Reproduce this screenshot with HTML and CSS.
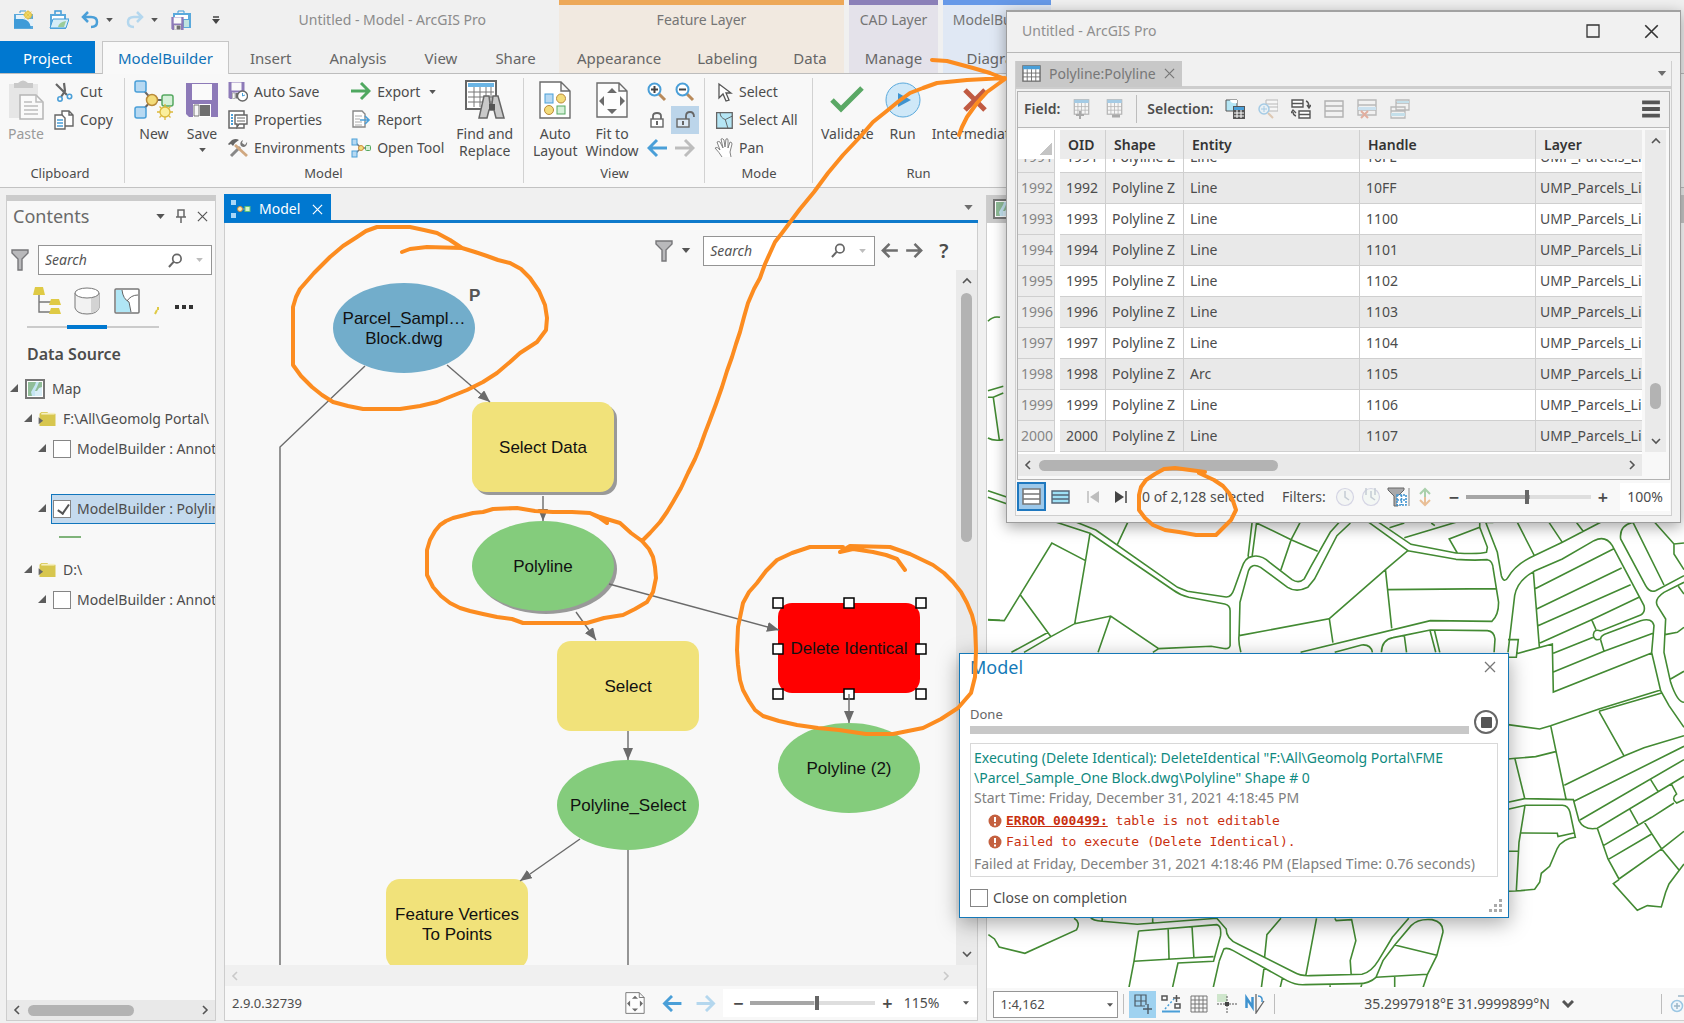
FILE: index.html
```html
<!DOCTYPE html>
<html lang="en">
<head>
<meta charset="utf-8">
<title>Untitled - Model - ArcGIS Pro</title>
<link rel="stylesheet" href="styles.css">
</head>
<body>
<svg class="defs" aria-hidden="true">
  <defs>
    <marker id="tip" viewBox="0 0 12 10" refX="12" refY="5" markerWidth="12" markerHeight="10" markerUnits="userSpaceOnUse" orient="auto"><path d="M0 0L12 5L0 10z" fill="#6b6b6b"/></marker>
    <symbol id="i-x" viewBox="0 0 12 12"><path d="M1 1l10 10M11 1L1 11" fill="none" stroke="currentColor" stroke-width="1.3"/></symbol>
    <symbol id="i-down" viewBox="0 0 10 6"><path d="M0 0h10L5 6z" fill="currentColor"/></symbol>
    <symbol id="i-tree" viewBox="0 0 8 8"><path d="M8 0v8H0z" fill="#5c5c5c"/></symbol>
    <symbol id="i-chev" viewBox="0 0 12 12"><path d="M2 8l4-4 4 4" fill="none" stroke="currentColor" stroke-width="1.6"/></symbol>
    <symbol id="i-filter" viewBox="0 0 18 22"><path d="M1 1h16v3l-6 6v11H7V10L1 4z" fill="#b9b9bb" stroke="#77777a" stroke-width="1.4"/></symbol>
    <symbol id="i-lens" viewBox="0 0 16 16"><circle cx="9.500" cy="6" r="4.500" fill="none" stroke="#666" stroke-width="1.8"/><path d="M6 9.500L1 15" stroke="#666" stroke-width="2.200"/></symbol>
    <symbol id="i-left" viewBox="0 0 20 18"><path d="M10 1L2 9l8 8M2 9h18" fill="none" stroke="currentColor" stroke-width="3"/></symbol>
    <symbol id="i-right" viewBox="0 0 20 18"><path d="M10 1l8 8-8 8M18 9H0" fill="none" stroke="currentColor" stroke-width="3"/></symbol>
    <symbol id="i-model" viewBox="0 0 20 20"><path d="M4 4l6 6 6 0M10 10l-6 6" stroke="#777" stroke-width="1.5" fill="none"/><rect x="1" y="1" width="5" height="6" fill="#b7d9f2" stroke="#4a9fd8"/><rect x="1" y="13" width="5" height="6" fill="#b7d9f2" stroke="#4a9fd8"/><circle cx="10" cy="10" r="2.500" fill="#f3dc7a" stroke="#c98b3a"/><rect x="14.500" y="7.500" width="5" height="5" rx="1" fill="#d5f0d8" stroke="#55a860"/></symbol>
    <symbol id="i-modelw" viewBox="0 0 20 18"><path d="M9 9h6" stroke="#9ab" fill="none"/><rect x="0" y="0" width="5" height="5" fill="#a9d6f7"/><rect x="0" y="13" width="5" height="5" fill="#a9d6f7"/><circle cx="9" cy="9" r="2.500" fill="#fbe9b8" stroke="#c98b3a"/><rect x="14" y="6.500" width="5" height="5" fill="#d8f5c8" stroke="#5fbf7a"/></symbol>
    <symbol id="i-floppy" viewBox="0 0 32 34"><path d="M0 0h32v34H3l-3-3z" fill="#8d7ab8"/><path d="M6 1h20v16H6z" fill="#fafafa"/><path d="M7 21h18v13H7z" fill="#fff"/><path d="M14 22h10v11H14z" fill="#6f6f6f"/><path d="M8 22h5v11H8z" fill="#f8f8f8" stroke="#777"/></symbol>
    <symbol id="i-fit" viewBox="0 0 32 36"><path d="M1 1h22l8 8v26H1zM23 1v8h8" fill="#fdfdfd" stroke="#6b6b6b" stroke-width="1.400"/><path d="M16 6l5 5H11zM16 32l5-5H11zM3 19l5-5v10zM29 19l-5-5v10z" fill="#6b6b6b"/></symbol>
    <symbol id="i-map" viewBox="0 0 20 20"><rect x="1" y="1" width="18" height="18" fill="#fff" stroke="#777" stroke-width="2"/><path d="M3 3h14v14H3z" fill="#90bd98"/><path d="M17 8l-3 1-2 3-3 0 1 5h7z" fill="#d9eef7"/><path d="M6 13l4-7 1-3h3l-2 5-2 4v5H7z" fill="#c5e5f3"/></symbol>
    <symbol id="i-folder" viewBox="0 0 20 18"><path d="M1 3l2-2h7l1 2h8v14H1z" fill="#d7c64e"/><path d="M3 3h15" stroke="#f6f0c0" stroke-width="2"/><path d="M0 7l5 4-5 4z" fill="#666"/></symbol>
    <symbol id="i-grid" viewBox="0 0 20 20"><rect x="1" y="1" width="18" height="18" fill="#fff" stroke="#6d6d6d" stroke-width="1.500"/><path d="M1 1h18v4H1z" fill="#4a9fd8"/><path d="M1 9.500h18M1 14h18M5.500 5v14M10 5v14M14.500 5v14" stroke="#6d6d6d"/></symbol>
    <symbol id="i-err" viewBox="0 0 14 14"><circle cx="7" cy="7" r="6.500" fill="#c4603f"/><path d="M7 3v5M7 9.500v2" stroke="#fff" stroke-width="2"/></symbol>
    <symbol id="i-sel" viewBox="0 0 20 20"><path d="M1 1h18v18H1z" fill="#b5e6f5" stroke="#666" stroke-width="1.500"/><path d="M5 1q0 6 6 8l3 10M19 5l-8 4" fill="none" stroke="#555"/></symbol>
  </defs>
</svg>

<div class="app">
<header class="top">
  <div class="top-main">
    <div class="quick">
      <button class="ic" aria-label="New project"><svg width="20" height="20" viewBox="0 0 20 20"><path d="M0 4h19v15H0z" fill="#5aa9dc"/><path d="M2 5h12v4h5v7H2z" fill="#e4f1fa"/><path d="M0 18V9h9q7 1 8 9z" fill="#3f9bd8"/><path d="M6 3V1h6" stroke="#3f9bd8" fill="none"/><circle cx="14" cy="5" r="3.500" fill="#f7e27a" stroke="#dcb83a"/><path d="M14 0v10M9 5h10M10.500 1.500l7 7M17.500 1.500l-7 7" stroke="#e5c548" stroke-width=".8"/></svg></button>
      <button class="ic" aria-label="Open project"><svg width="20" height="20" viewBox="0 0 20 20"><path d="M1 4h16v15H1z" fill="#5aa9dc"/><path d="M3 6h12v4H3z" fill="#fff"/><path d="M6 4V1h6v3" stroke="#3f9bd8" fill="none" stroke-width="1.500"/><path d="M4 9h16l-3 9H1z" fill="#d5edf7" stroke="#3f9bd8"/><path d="M9 17q1-5 8-6l-2 6z" fill="#9acb9a"/></svg></button>
      <button class="ic undo" aria-label="Undo"><svg width="18" height="18" viewBox="0 0 18 18"><path d="M7 1L2 6l5 5M2 6h8q6 0 6 5t-6 5" fill="none" stroke="#4a9fd8" stroke-width="2.500"/></svg><svg class="c-dk" width="7" height="4"><use href="#i-down"/></svg></button>
      <button class="ic undo" aria-label="Redo"><svg width="18" height="18" viewBox="0 0 18 18"><path d="M11 1l5 5-5 5M16 6H8q-6 0-6 5t6 5" fill="none" stroke="#b4d7ee" stroke-width="2.500"/></svg><svg class="c-dk" width="7" height="4"><use href="#i-down"/></svg></button>
      <button class="ic save" aria-label="Save project"><svg width="20" height="20" viewBox="0 0 20 20"><path d="M2 3h18v15H2z" fill="#5aa9dc"/><path d="M4 5h13v4H4z" fill="#fff"/><path d="M7 3V1h6v2" stroke="#3f9bd8" fill="none"/><path d="M13 10h5v7h-5z" fill="#bfe3e0"/><svg x="0" y="7" width="13" height="13"><use href="#i-floppy"/></svg></svg></button>
      <button class="ic" aria-label="Customize"><svg width="8" height="8" viewBox="0 0 8 8"><path d="M1 1h6" stroke="#444" stroke-width="1.500"/><path d="M0 3h8L4 8z" fill="#444"/></svg></button>
      <h1>Untitled - Model - ArcGIS Pro</h1>
    </div>
    <nav class="tabs">
      <a href="#" class="tab project">Project</a>
      <a href="#" class="tab active">ModelBuilder</a>
      <a href="#" class="tab">Insert</a><a href="#" class="tab">Analysis</a><a href="#" class="tab">View</a><a href="#" class="tab">Share</a>
    </nav>
  </div>
  <div class="ctx orange"><span>Feature Layer</span><nav class="tabs"><a href="#" class="tab">Appearance</a><a href="#" class="tab">Labeling</a><a href="#" class="tab">Data</a></nav></div>
  <div class="ctx purple"><span>CAD Layer</span><nav class="tabs"><a href="#" class="tab">Manage</a></nav></div>
  <div class="ctx blue"><span>ModelBuilder</span><nav class="tabs"><a href="#" class="tab">Diagram</a></nav></div>
</header>

<section class="ribbon">
  <div class="group g-clip">
    <div class="gbody">
      <button class="big dim"><svg width="36" height="40" viewBox="0 0 36 40"><path d="M1 4h29v34H1z" fill="#e6e6e6"/><path d="M6 3h4q5-5 10 0h5v5H6z" fill="#c9c9c9"/><path d="M12 15h16l7 7v17H12z" fill="#fafafa" stroke="#b5b5b5" stroke-width="1.500"/><path d="M28 15v7h7M16 22h8M16 26h14M16 30h14M16 34h14" stroke="#bdbdbd" stroke-width="1.500" fill="none"/></svg>Paste</button>
      <div class="col">
        <button class="small"><svg viewBox="0 0 20 20"><path d="M2 2l11 11M10 1l1 8-4 6" stroke="#666" stroke-width="2.200" fill="none"/><circle cx="6" cy="17" r="2.200" fill="none" stroke="#4a9fd8" stroke-width="1.600"/><circle cx="15.500" cy="14.500" r="2.200" fill="none" stroke="#4a9fd8" stroke-width="1.600"/></svg>Cut</button>
        <button class="small"><svg viewBox="0 0 20 20"><path d="M8 1h7l4 4v11H8zM15 1v4h4" fill="#fff" stroke="#666" stroke-width="1.400"/><path d="M1 5h7l3 3v11H1z" fill="#fff" stroke="#666" stroke-width="1.400"/><path d="M3 10h6M3 13h6M3 16h6" stroke="#4a9fd8" stroke-width="1.300"/></svg>Copy</button>
      </div>
    </div>
    <div class="glabel">Clipboard</div>
  </div>
  <div class="group g-model">
    <div class="gbody">
      <button class="big"><svg width="40" height="40" viewBox="0 0 40 40"><path d="M6 6l12 14h16M18 20L6 33" stroke="#666" stroke-width="2" fill="none"/><rect x="1" y="1" width="11" height="11" rx="2" fill="#b7d9f2" stroke="#4a9fd8" stroke-width="1.500"/><rect x="1" y="27" width="11" height="11" rx="2" fill="#b7d9f2" stroke="#4a9fd8" stroke-width="1.500"/><circle cx="18" cy="20" r="5.500" fill="#f3dc7a" stroke="#b98a3a" stroke-width="1.500"/><rect x="28" y="15" width="11" height="11" rx="2" fill="#d5f0d8" stroke="#55a860" stroke-width="1.500"/><path d="M31 24v16M23 32h16M25.500 26.500l11 11M36.500 26.500l-11 11" stroke="#dcb83a" stroke-width="1.300"/><circle cx="31" cy="32" r="5" fill="#fbef9c" stroke="#dcb83a" stroke-width="1.300"/></svg>New</button>
      <button class="big save-btn"><svg class="tall" width="32" height="34"><use href="#i-floppy"/></svg>Save<svg class="arrow c-dk" width="7" height="4"><use href="#i-down"/></svg></button>
      <div class="col">
        <button class="small"><svg viewBox="0 0 20 20"><svg width="17" height="17"><use href="#i-floppy"/></svg><circle cx="14.500" cy="14" r="5" fill="#fff" stroke="#666" stroke-width="1.400"/><path d="M14.500 11v3l2.500-1" stroke="#4a9fd8" fill="none"/></svg>Auto Save</button>
        <button class="small"><svg viewBox="0 0 20 20"><path d="M1 1h15v17H1z" fill="#fff" stroke="#666" stroke-width="1.500"/><path d="M4 4v12" stroke="#4a9fd8" stroke-width="2" stroke-dasharray="2 1"/><path d="M7 5h12v9h-8l-2 3v-3H7z" fill="#fff" stroke="#666" stroke-width="1.400"/><path d="M9 8h8M9 11h8" stroke="#666"/></svg>Properties</button>
        <button class="small"><svg viewBox="0 0 20 20"><path d="M0 6l4-4q4-2 7 0l-4 3-2 3-2-2-2 1z" fill="#666"/><path d="M3 18l9-9" stroke="#888" stroke-width="3"/><path d="M7 7l12 11" stroke="#d0a880" stroke-width="2.800"/><path d="M13 8a4 4 0 0 1 2-6l-1 3 3 2 2-3a4 4 0 0 1-4 5z" fill="#777"/></svg>Environments</button>
      </div>
      <div class="col c-exp">
        <button class="small"><svg viewBox="0 0 20 20"><path d="M0 9h17M10 1l8 8-8 8" fill="none" stroke="#4fa860" stroke-width="3"/></svg>Export<svg class="arrow c-dk" viewBox="0 0 10 6"><use href="#i-down"/></svg></button>
        <button class="small"><svg viewBox="0 0 20 20"><path d="M2 1h9l3 3v13H2z" fill="#fff" stroke="#888" stroke-width="1.400"/><path d="M4 6h7M4 9h5M4 12h7M4 15h7" stroke="#aaa"/><path d="M9 10h8M14 6l4 4-4 4" fill="none" stroke="#4a9fd8" stroke-width="1.600"/></svg>Report</button>
        <button class="small"><svg viewBox="0 0 20 20"><use href="#i-model"/></svg>Open Tool</button>
      </div>
      <button class="big"><svg width="40" height="40" viewBox="0 0 40 40"><path d="M1 1h30v28H1z" fill="#fff" stroke="#666" stroke-width="2"/><path d="M3 3h26v4H3z" fill="#6ab4e4"/><path d="M3 12h26M3 17h26M3 22h26M9 7v20M15 7v20M21 7v20M26 7v20" stroke="#777"/><path d="M19 16h5l1 8h2l1-8h5l6 22h-8l-2-8h-5l-2 8h-8z" fill="#c9c9c9" stroke="#666" stroke-width="1.500"/><path d="M24 24h6v6h-6z" fill="#555"/></svg>Find and<br>Replace</button>
    </div>
    <div class="glabel">Model</div>
  </div>
  <div class="group g-view">
    <div class="gbody">
      <button class="big"><svg width="32" height="40" viewBox="0 0 32 40"><path d="M1 2h21l9 9v27H1zM22 2v9h9" fill="#fff" stroke="#6b6b6b" stroke-width="1.400"/><rect x="6" y="14" width="8" height="9" fill="#b7d9f2" stroke="#4a9fd8"/><rect x="18" y="26" width="8" height="8" fill="#d5f0d8" stroke="#55a860"/><circle cx="22" cy="18.500" r="4.500" fill="#f3dc7a" stroke="#b98a3a"/><circle cx="10" cy="30" r="4.500" fill="#f3dc7a" stroke="#b98a3a"/></svg>Auto<br>Layout</button>
      <button class="big"><svg width="32" height="40" viewBox="0 -2 32 40"><use href="#i-fit" width="32" height="36"/></svg>Fit to<br>Window</button>
      <div class="tools">
        <button aria-label="Zoom in"><svg viewBox="0 0 20 20"><path d="M12 12l6 6" stroke="#b98a5a" stroke-width="3"/><circle cx="7.500" cy="7.500" r="6" fill="#fff" stroke="#4a9fd8" stroke-width="2"/><path d="M4 7.500h7M7.500 4v7" stroke="#444" stroke-width="2"/></svg></button>
        <button aria-label="Zoom out"><svg viewBox="0 0 20 20"><path d="M12 12l6 6" stroke="#b98a5a" stroke-width="3"/><circle cx="7.500" cy="7.500" r="6" fill="#fff" stroke="#4a9fd8" stroke-width="2"/><path d="M4 7.500h7" stroke="#444" stroke-width="2"/></svg></button>
        <button aria-label="Lock"><svg viewBox="0 0 20 20"><path d="M6 9V6q0-3 4-3t4 3v3" fill="none" stroke="#666" stroke-width="1.800"/><rect x="4" y="9" width="12" height="8" fill="#fff" stroke="#666" stroke-width="1.400"/><path d="M10 11v4" stroke="#666" stroke-width="2"/></svg></button>
        <button class="on" aria-label="Unlock"><svg viewBox="0 0 20 20"><path d="M11 9V6q0-4 4-4t4 5" fill="none" stroke="#666" stroke-width="1.800"/><rect x="2" y="9" width="12" height="8" fill="#dce9f5" stroke="#666" stroke-width="1.400"/><path d="M8 11v4" stroke="#666" stroke-width="2"/></svg></button>
        <button class="c-blue" aria-label="Previous"><svg><use href="#i-left"/></svg></button>
        <button class="c-lt" aria-label="Next"><svg><use href="#i-right"/></svg></button>
      </div>
    </div>
    <div class="glabel">View</div>
  </div>
  <div class="group g-mode">
    <div class="gbody"><div class="col">
      <button class="small"><svg viewBox="0 0 20 20"><path d="M5 2v14l4-4 3 7 3-1-3-7h5z" fill="#fff" stroke="#555" stroke-width="1.300"/></svg>Select</button>
      <button class="small"><svg viewBox="-2 -2 23 23"><use href="#i-sel" width="20" height="20"/></svg>Select All</button>
      <button class="small"><svg viewBox="0 0 20 20"><path d="M8 19q-3-5-7-9 2-2 5 2L3 4q2-1 3 0l3 6L7 1q2-1 3 1l1 7 1-8q2-1 2 1v8l2-6q2 0 2 2l-2 8 1 5" fill="#fff" stroke="#777" stroke-width=".9"/></svg>Pan</button>
    </div></div>
    <div class="glabel">Mode</div>
  </div>
  <div class="group g-run">
    <div class="gbody">
      <button class="big"><svg width="36" height="40" viewBox="0 0 36 40"><path d="M3 20l9 9L33 8" fill="none" stroke="#5aa865" stroke-width="5"/></svg>Validate</button>
      <button class="big"><svg width="36" height="40" viewBox="0 0 36 40"><circle cx="18" cy="20" r="17" fill="#cfe8f8" stroke="#5aa9dc"/><path d="M13 13l13 7-13 7z" fill="#3f93cf"/></svg>Run</button>
      <button class="big"><svg width="36" height="40" viewBox="0 0 36 40"><path d="M8 10l20 20M28 10L8 30" stroke="#c05a42" stroke-width="5"/></svg>Intermediate</button>
    </div>
    <div class="glabel">Run</div>
  </div>
</section>

<main class="work">
  <aside class="contents">
    <div class="panel-head"><h2>Contents</h2><svg class="c-dk" width="9" height="5"><use href="#i-down"/></svg><svg width="10" height="14" viewBox="0 0 10 14"><path d="M2 1h6v7H2zM0 8h10M5 8v6" stroke="#666" stroke-width="1.500" fill="none"/></svg><svg class="c-dk" width="11" height="11"><use href="#i-x"/></svg></div>
    <div class="find"><svg width="18" height="22"><use href="#i-filter"/></svg><label class="search"><input type="text" placeholder="Search" aria-label="Search contents"><svg width="15" height="15"><use href="#i-lens"/></svg><svg class="c-lt" width="7" height="4"><use href="#i-down"/></svg></label></div>
    <div class="listby">
      <div class="lb"><svg width="28" height="28" viewBox="0 0 28 28"><path d="M6 8v17h12M6 15h12" stroke="#777" fill="none" stroke-width="1.400"/><path d="M2 0h8l2 8H0zM18 12h8l2 6H16zM18 21h8l2 6H16z" fill="#dfca45"/></svg></div>
      <div class="lb on"><svg width="28" height="28" viewBox="0 0 28 28"><path d="M2 6v15q2 6 12 6t12-6V6" fill="#f2f2f2" stroke="#777"/><path d="M18 9v17q7-1 8-5V6z" fill="#d3d3d3"/><ellipse cx="14" cy="6" rx="12" ry="5" fill="#fff" stroke="#777"/></svg></div>
      <div class="lb"><svg width="28" height="28" viewBox="0 0 28 28"><rect x="2" y="2" width="24" height="24" rx="1" fill="#fff" stroke="#777" stroke-width="1.500"/><path d="M3 3h6q1 9 7 12l2 10H3z" fill="#b0e6f5"/><path d="M9 3q1 9 7 12l2 10M14 14q4-6 11-6" fill="none" stroke="#666"/></svg></div>
      <div class="lb cut"><svg width="5" height="28" viewBox="0 0 5 28"><path d="M1 27l2-4M4 23v-3" stroke="#dfca45" stroke-width="2"/></svg></div>
      <span class="dots"></span>
    </div>
    <h3>Data Source</h3>
    <ul class="tree">
      <li class="l0"><svg class="tw" width="8" height="8"><use href="#i-tree"/></svg><svg width="20" height="20"><use href="#i-map"/></svg><span>Map</span></li>
      <li class="l1"><svg class="tw" width="8" height="8"><use href="#i-tree"/></svg><svg width="19" height="16"><use href="#i-folder"/></svg><span>F:\All\Geomolg Portal\</span></li>
      <li class="l2"><svg class="tw" width="8" height="8"><use href="#i-tree"/></svg><label><input type="checkbox">ModelBuilder : Annotation</label></li>
      <li class="gap"></li>
      <li class="l2 picked"><svg class="tw" width="8" height="8"><use href="#i-tree"/></svg><label><input type="checkbox" checked>ModelBuilder : Polyline</label></li>
      <li class="legend"><i></i></li>
      <li class="l1"><svg class="tw" width="8" height="8"><use href="#i-tree"/></svg><svg width="19" height="16"><use href="#i-folder"/></svg><span>D:\</span></li>
      <li class="l2"><svg class="tw" width="8" height="8"><use href="#i-tree"/></svg><label><input type="checkbox">ModelBuilder : Annotation</label></li>
    </ul>
    <div class="hbar c-dk"><svg class="r270" width="12" height="12"><use href="#i-chev"/></svg><i></i><svg class="r90" width="12" height="12"><use href="#i-chev"/></svg></div>
  </aside>

  <section class="model">
    <div class="doc-tabs"><a href="#" class="doc"><svg width="20" height="18"><use href="#i-modelw"/></svg>Model<svg width="11" height="11"><use href="#i-x"/></svg></a><svg class="c-md" width="9" height="5"><use href="#i-down"/></svg></div>
    <div class="sheet">
      <div class="canvas">
        <div class="node oval blue n1">Parcel_Sampl…<br>Block.dwg</div><b class="param">P</b>
        <div class="node box sh n2">Select Data</div>
        <div class="node oval sh n3">Polyline</div>
        <div class="node box n4">Select</div>
        <div class="node oval n5">Polyline_Select</div>
        <div class="node box n6">Feature Vertices<br>To Points</div>
        <div class="node box red n7">Delete Identical</div>
        <div class="node oval n8">Polyline (2)</div>
        <svg class="edges" width="743" height="742" viewBox="225 223 743 742">
          <g fill="#fff" stroke="#000" stroke-width="1.500"><path d="M773 598h10v10h-10zM844 598h10v10h-10zM916 598h10v10h-10zM773 644h10v10h-10zM916 644h10v10h-10zM773 689h10v10h-10zM844 689h10v10h-10zM916 689h10v10h-10z"/></g>
          <g fill="none" stroke="#6b6b6b" stroke-width="1.400"><path d="M365 366L280 447V965M628 850V965"/><path marker-end="url(#tip)" d="M447 365L490 402"/><path marker-end="url(#tip)" d="M543 496V521"/><path marker-end="url(#tip)" d="M576 612L596 640"/><path marker-end="url(#tip)" d="M609 584L779 630"/><path marker-end="url(#tip)" d="M628 731V760"/><path marker-end="url(#tip)" d="M580 839L520 881"/><path marker-end="url(#tip)" d="M849 694V723"/></g>
        </svg>
      </div>
      <div class="canvas-tools">
        <svg width="18" height="22"><use href="#i-filter"/></svg><svg class="c-dk" width="10" height="5"><use href="#i-down"/></svg>
        <label class="search"><input type="text" placeholder="Search" aria-label="Search model"><svg width="15" height="15"><use href="#i-lens"/></svg><svg class="c-lt" width="7" height="4"><use href="#i-down"/></svg></label>
        <svg class="c-md" width="17" height="15"><use href="#i-left"/></svg><svg class="c-md" width="17" height="15"><use href="#i-right"/></svg><b>?</b>
      </div>
      <div class="vbar c-dk"><svg width="12" height="12"><use href="#i-chev"/></svg><i></i><svg class="r180" width="12" height="12"><use href="#i-chev"/></svg></div>
    </div>
    <div class="hbar faint"><svg class="r270" width="12" height="12"><use href="#i-chev"/></svg><svg class="r90" width="12" height="12"><use href="#i-chev"/></svg></div>
    <footer class="status"><span class="ver">2.9.0.32739</span>
      <svg class="fit" width="20" height="22"><use href="#i-fit"/></svg><svg class="c-blue" width="20" height="17"><use href="#i-left"/></svg><svg class="c-pale" width="20" height="17"><use href="#i-right"/></svg>
      <span class="zoombox"><button>−</button><input type="range" min="0" max="100" value="53" aria-label="Zoom"><button>+</button><span class="pct">115%</span><svg class="c-dk" width="6" height="4"><use href="#i-down"/></svg></span>
    </footer>
  </section>

  <section class="mapview">
    <div class="map-tab"><svg width="20" height="20"><use href="#i-map"/></svg></div>
    <div class="map">
      <svg width="697" height="764" viewBox="987 224 697 764">
        <g class="lines">
          <g transform="translate(600 190) scale(.3333)"><path d="M1164 397Q1180 380 1200 385M1164 605L1210 592M1164 625H1180L1210 612M1180 625L1198 752M1164 747Q1180 757 1210 752M1164 905L1220 924M1164 925L1220 944M1164 1292L1200 1294"/></g>
          <g transform="translate(980 520) scale(.449 .3333)"><path d="M170 10L245 43L430 213Q445 228 465 235L545 255Q557 258 557 275V380Q555 392 540 388L515 382L398 389L291 291L211 314L158 353L98 400M215 10L258 33L440 205L462 217L548 234Q560 235 566 210L582 150Q590 115 605 113Q625 105 645 130L695 182Q710 195 722 180L738 140L780 40L800 10M245 43L235 125L211 314M235 125L160 72L54 305L18 303M90 228L158 353M152 340L70 400M291 291L263 400M398 389L385 400M329 10L306 76M606 10L597 113M616 10L606 113M581 400Q575 370 577 350L579 250L598 155Q605 130 625 145L685 205Q705 222 730 205L745 180L795 50L825 12M616 12L693 62L752 97M713 10L693 62L670 153M577 350L778 299L786 371M778 299L903 152L953 95L866 10M888 10L960 76L1060 102Q1110 106 1128 100L1130 85L1113 25V10M953 95L1060 121Q1100 125 1130 122Q1142 125 1143 150L1155 250Q1155 290 1140 307L1003 305L714 400M903 152L917 328M908 212L1150 209M1113 25L1045 60L1063 102M912 26L945 12M945 56L1060 10M1005 12L1013 20M790 400L850 378Q870 375 874 400M894 400Q895 362 920 356L1003 333L1130 335Q1145 337 1147 360L1145 400M945 350L950 400M1002 333L1015 400M1012 333L1024 400"/></g>
          <g transform="translate(1484 510) scale(.3333)"><path d="M5 40L40 130L52 200Q60 225 72 205Q95 165 150 140L235 100L350 40M5 40L28 40M100 40L150 138M195 40L235 100M277 40L297 66M72 430L92 260Q100 215 150 187L235 150L330 95Q365 78 385 110L480 290Q485 310 470 318L350 366Q330 358 328 378Q330 398 350 390Q350 380 370 373L470 335Q505 325 510 350L503 430L530 545L555 590L600 655M148 187L166 413M152 240L388 120M158 300L413 177M162 350L440 227M168 402L323 332L465 265M323 332L336 362M98 434L205 405L208 549L503 432M208 433L328 385M208 489L360 427L507 373M350 393L360 427M72 392H103L97 445H72M447 40Q405 50 410 90L485 230Q497 252 515 245L600 200M447 40L540 228M512 40L570 105L600 102M570 105V135L600 182M600 220L540 250Q510 270 520 290L545 330L540 430L560 520Q580 580 600 580M583 232L600 255M543 377L580 370L600 355M560 510L600 487M72 647L167 660L200 650L345 600L530 543M345 607L533 552M345 607L420 741M200 650L246 870M72 750L95 748L155 743L215 728M93 750L122 868M241 829L420 741L480 716L600 680M270 877L600 712M288 933L600 752M72 880L122 869L268 872L285 935Q300 965 340 958L600 802M72 901L125 889H235Q253 890 258 910L274 985Q235 990 220 1018L197 1072L172 1093L167 1120L152 1141L110 1145L72 1147M123 889L105 1000L97 1145M110 972L220 973L222 983L270 972M72 1027H103M340 958L372 1050L405 1110L533 1020L600 967M405 1112L388 1124L460 1204L490 1190L532 1194L545 1150L555 1125L600 1065M358 1010L503 925L570 882M372 1052L503 975M480 938L533 1020L585 1083M437 900L462 945M500 812L522 847M562 825L578 855Q560 870 578 882L600 872"/></g>
          <g transform="translate(950 640) scale(.4681 .3333)"><path d="M82 887L95 900L105 924L160 943L270 873Q280 850 265 838M300 835Q305 845 325 847L400 856L570 838L590 870Q590 900 615 915L735 1000Q750 1012 770 1010L880 1006Q900 1000 915 965L945 895L980 838M403 876L570 857Q580 860 578 890L563 967L487 972L475 1048M403 876L393 967L382 1048M393 967L510 957L563 953M466 868L468 962M517 862L521 956M433 838V852M325 838V847M575 967L562 1048M575 967L585 930Q592 925 605 935L720 1025Q740 1040 760 1037L870 1034Q895 1035 910 1015L925 965L950 918L985 860Q1000 838 1030 842Q1055 850 1053 880L1040 950L1020 1006L1010 1048M950 918L1040 949M910 1015L1020 1006M950 1013V1048M671 985L665 1048M710 1018L705 1048M812 1037V1048M880 1035L877 1048M707 838L677 887L672 955M783 838L760 1010M822 838L825 845L858 842L867 905L855 965L857 1006"/></g>
        </g>
      </svg>
    </div>
    <footer class="status map-status">
      <span class="combo"><select aria-label="Map scale"><option>1:4,162</option></select><svg class="c-dk" width="6" height="4"><use href="#i-down"/></svg></span><i class="sep"></i>
      <button class="mt on" aria-label="Constraints"><svg width="20" height="20" viewBox="0 0 20 20"><path d="M2 1h11v11H2zM2 7h11M8 1v11" fill="none" stroke="#4d5b66" stroke-width="1.200"/><path d="M12 11h8v8h-8z" fill="#9fd2f0"/><path d="M10 15h9M15 10v10" stroke="#4d5b66" stroke-width="1.400"/></svg></button>
      <button class="mt" aria-label="Snapping"><svg width="20" height="20" viewBox="0 0 20 20"><path d="M1 2h5v4H1zM14 10h5v4h-5zM12 4h7M15.500 1v7" fill="none" stroke="#555" stroke-width="1.500"/><path d="M4 15L13 5" stroke="#4a9fd8" stroke-dasharray="2 2" stroke-width="1.500"/><path d="M1 17.500h18" stroke="#4a9fd8" stroke-width="2"/></svg></button>
      <button class="mt" aria-label="Grid"><svg width="18" height="18" viewBox="0 0 18 18"><path d="M1 1h16v16H1zM1 5h16M1 9h16M1 13h16M5 1v16M9 1v16M13 1v16" fill="none" stroke="#777"/></svg></button>
      <button class="mt" aria-label="Inference"><svg width="20" height="20" viewBox="0 0 20 20"><path d="M0 0h10v8H0z" fill="#cfe6cc"/><path d="M0 10h20M10 2v18" stroke="#555" stroke-dasharray="2 1"/><path d="M8 8h4v4H8z" fill="#444"/></svg></button>
      <button class="mt" aria-label="Corrections"><svg width="20" height="20" viewBox="0 0 20 20"><path d="M1.500 14V4l6 9V3" fill="none" stroke="#3f93cf" stroke-width="2.500"/><path d="M11 0v19l8-12" fill="none" stroke="#666" stroke-width="1.300"/><path d="M13 2q5 0 4 6" fill="none" stroke="#3f93cf" stroke-width="1.500"/></svg></button>
      <i class="sep"></i>
      <span class="coords">35.2997918°E 31.9999899°N <svg class="c-dk" width="12" height="8" viewBox="0 0 12 8"><path d="M1 1l5 5 5-5" fill="none" stroke="currentColor" stroke-width="3"/></svg></span>
      <i class="sep"></i><svg class="rot" width="14" height="20" viewBox="0 0 14 20"><circle cx="7" cy="12" r="5.500" fill="#eef6fb" stroke="#9cc7e3" stroke-width="1.500"/><path d="M4 12h6M7 9v6M8 2h6" stroke="#9cb7c8" stroke-width="1.500"/></svg>
    </footer>
  </section>
</main>
</div>

<section class="win" aria-label="Attribute table">
  <div class="win-title"><span>Untitled - ArcGIS Pro</span><svg width="14" height="14" viewBox="0 0 14 14"><path d="M1 1h12v12H1z" fill="none" stroke="#333" stroke-width="1.300"/></svg><svg width="15" height="15"><use href="#i-x"/></svg></div>
  <div class="win-body">
    <div class="win-tabs"><a href="#"><svg width="19" height="17" viewBox="0 0 20 20" preserveAspectRatio="none"><use href="#i-grid"/></svg>Polyline:Polyline<svg width="11" height="11"><use href="#i-x"/></svg></a><svg class="c-md" width="10" height="5"><use href="#i-down"/></svg></div>
    <div class="win-sheet">
      <div class="ttools"><b>Field:</b>
        <svg class="fade" viewBox="0 0 20 20"><use href="#i-grid" width="19" height="16"/><path d="M4 16h8M8 12v8" stroke="#555" stroke-width="2"/></svg>
        <svg class="fade" viewBox="0 0 20 20"><use href="#i-grid" width="19" height="16"/><path d="M7 17h8" stroke="#555" stroke-width="3"/></svg>
        <i class="sep"></i><b>Selection:</b>
        <svg viewBox="0 0 20 20"><path d="M1 1h11v11H1z" fill="#b5e6f5" stroke="#555"/><path d="M5 1q1 4 7 3V1z" fill="#fff"/><path d="M8 7h12v13H8z" fill="#555"/><path d="M9 8h10v3H9z" fill="#4a9fd8"/><path d="M9 14h10M9 17h10M12 11v8M16 11v8" stroke="#fff"/></svg>
        <svg class="fade" viewBox="0 0 20 20"><path d="M8 1h12v11H8zM8 5h12M8 8h12" fill="#fff" stroke="#777"/><circle cx="6" cy="10" r="5" fill="#e2f1fa" stroke="#4a9fd8" stroke-width="1.500"/><path d="M3 10h6M6 7v6" stroke="#4a9fd8"/><path d="M10 14l5 5" stroke="#c9986a" stroke-width="2"/></svg>
        <svg viewBox="0 0 20 20"><path d="M1 1h11v7H1zM1 4.500h11M8 12h11v7H8zM8 15.500h11" fill="#fff" stroke="#555" stroke-width="1.400"/><path d="M15 2q3 1 3 6M16 6l2 3 2-3M5 17q-3-1-3-4M0 14l2-3 3 3" fill="none" stroke="#555" stroke-width="1.400"/></svg>
        <svg class="fade" viewBox="0 0 20 20"><path d="M1 2h18v16H1zM1 7h18M1 12h18" fill="#f4f4f4" stroke="#666" stroke-width="1.400"/></svg>
        <svg class="fade" viewBox="0 0 20 20"><path d="M1 1h18v15H1zM1 6h18M1 11h18" fill="#f4f4f4" stroke="#777" stroke-width="1.400"/><path d="M1 8h18v3H1z" fill="#9fd0ee"/><path d="M4 12l7 7M11 12l-7 7" stroke="#d0603f" stroke-width="2"/></svg>
        <svg class="fade" viewBox="0 0 20 20"><path d="M6 1h13v10H6zM1 8h14v11H1zM1 12h14M6 4h13" fill="#f4f4f4" stroke="#777" stroke-width="1.300"/><path d="M1 14h14v3H1zM7 2h12v2H7z" fill="#8fcbe4"/></svg>
        <svg class="burger" viewBox="0 0 18 16"><path d="M1 2h16M1 8h16M1 14h16" stroke="#555" stroke-width="3.500"/></svg>
      </div>
      <div class="grid-area">
        <div class="grid-wrap">
          <table>
            <colgroup><col class="w-n"><col class="w-g"><col class="w-o"><col class="w-s"><col class="w-e"><col class="w-h"><col class="w-l"></colgroup>
            <thead><tr><th class="corner"><i></i></th><td class="g"></td><th>OID</th><th>Shape</th><th>Entity</th><th>Handle</th><th>Layer</th></tr></thead>
            <tbody>
              <tr class="part"><th><div>1991</div></th><td class="g"></td><td><div>1991</div></td><td><div>Polyline Z</div></td><td><div>Line</div></td><td><div>10FE</div></td><td><div>UMP_Parcels_Li</div></td></tr>
              <tr><th>1992</th><td class="g"></td><td>1992</td><td>Polyline Z</td><td>Line</td><td>10FF</td><td>UMP_Parcels_Li</td></tr>
              <tr><th>1993</th><td class="g"></td><td>1993</td><td>Polyline Z</td><td>Line</td><td>1100</td><td>UMP_Parcels_Li</td></tr>
              <tr><th>1994</th><td class="g"></td><td>1994</td><td>Polyline Z</td><td>Line</td><td>1101</td><td>UMP_Parcels_Li</td></tr>
              <tr><th>1995</th><td class="g"></td><td>1995</td><td>Polyline Z</td><td>Line</td><td>1102</td><td>UMP_Parcels_Li</td></tr>
              <tr><th>1996</th><td class="g"></td><td>1996</td><td>Polyline Z</td><td>Line</td><td>1103</td><td>UMP_Parcels_Li</td></tr>
              <tr><th>1997</th><td class="g"></td><td>1997</td><td>Polyline Z</td><td>Line</td><td>1104</td><td>UMP_Parcels_Li</td></tr>
              <tr><th>1998</th><td class="g"></td><td>1998</td><td>Polyline Z</td><td>Arc</td><td>1105</td><td>UMP_Parcels_Li</td></tr>
              <tr><th>1999</th><td class="g"></td><td>1999</td><td>Polyline Z</td><td>Line</td><td>1106</td><td>UMP_Parcels_Li</td></tr>
              <tr><th>2000</th><td class="g"></td><td>2000</td><td>Polyline Z</td><td>Line</td><td>1107</td><td>UMP_Parcels_Li</td></tr>
            </tbody>
          </table>
          <div class="hbar c-dk"><svg class="r270" width="12" height="12"><use href="#i-chev"/></svg><i></i><svg class="r90" width="12" height="12"><use href="#i-chev"/></svg></div>
        </div>
        <div class="vbar c-dk"><svg width="12" height="12"><use href="#i-chev"/></svg><i></i><svg class="r180" width="12" height="12"><use href="#i-chev"/></svg></div>
      </div>
    </div>
    <footer class="tstatus">
      <button class="view on" aria-label="Show all records"><svg width="19" height="17" viewBox="0 0 19 17"><path d="M1 1h17v15H1zM1 6h17M1 11h17" fill="#fff" stroke="#777" stroke-width="1.600"/></svg></button>
      <button class="view" aria-label="Show selected records"><svg width="19" height="14" viewBox="0 0 19 14"><path d="M1 1h17v12H1zM1 5h17M1 9h17" fill="#9fe0f5" stroke="#567" stroke-width="1.400"/></svg></button>
      <svg class="c-lt first" width="12" height="12" viewBox="0 0 12 12"><path d="M1 0v12" stroke="currentColor" stroke-width="1.500"/><path d="M12 0v12L3 6z" fill="currentColor"/></svg>
      <svg class="last" width="12" height="12" viewBox="0 0 12 12"><path d="M11 0v12" stroke="#444" stroke-width="1.500"/><path d="M0 0v12l9-6z" fill="#444"/></svg>
      <span class="selcount">0 of 2,128 selected</span><span class="filters">Filters:</span>
      <svg class="fade" width="20" height="20" viewBox="0 0 20 20"><circle cx="10" cy="10" r="8.500" fill="#eef3f0" stroke="#aac" stroke-width="1.200"/><path d="M10 4v6l4 3" fill="none" stroke="#89a" stroke-width="1.500"/></svg>
      <svg class="fade" width="20" height="20" viewBox="0 0 20 20"><circle cx="10" cy="10" r="8.500" fill="#eef6f0" stroke="#aac" stroke-width="1.200"/><path d="M10 4v6l4 3M5 1v7M14 1v7" fill="none" stroke="#89a" stroke-width="1.500"/></svg>
      <svg width="23" height="20" viewBox="0 0 23 20"><path d="M1 1h16v2l-6 6v10H7V9L1 3z" fill="#a8a8aa" stroke="#666"/><path d="M10 8h9v10h-9zM10 13h9M14.500 8v10" fill="#fff" stroke="#3f93cf" stroke-width="1.600" stroke-dasharray="2 1"/><path d="M22 1v18" stroke="#888"/></svg>
      <svg class="updown" width="12" height="20" viewBox="0 0 12 20"><path d="M6 10V2M1 7l5-5 5 5" fill="none" stroke="#a9d0ab" stroke-width="2"/><path d="M6 10v8M1 13l5 5 5-5" fill="none" stroke="#e9bf97" stroke-width="2"/></svg>
      <span class="zoombox"><button>−</button><input type="range" min="0" max="100" value="49" aria-label="Table zoom"><button>+</button><span class="pct">100%</span></span>
    </footer>
  </div>
</section>

<section class="dlg" role="dialog" aria-label="Model">
  <div class="dlg-head"><h2>Model</h2><svg width="12" height="12"><use href="#i-x"/></svg></div>
  <div class="run-row"><div class="run-col"><span>Done</span><div class="bar"></div></div><button class="stop" aria-label="Stop"><i></i></button></div>
  <div class="log">
    <p class="exec">Executing (Delete Identical): DeleteIdentical "F:\All\Geomolg Portal\FME<br>\Parcel_Sample_One Block.dwg\Polyline" Shape # 0</p>
    <p>Start Time: Friday, December 31, 2021 4:18:45 PM</p>
    <div class="errors">
      <p class="err"><svg width="14" height="14"><use href="#i-err"/></svg><span><a href="#">ERROR 000499:</a> table is not editable</span></p>
      <p class="err"><svg width="14" height="14"><use href="#i-err"/></svg><span>Failed to execute (Delete Identical).</span></p>
    </div>
    <p>Failed at Friday, December 31, 2021 4:18:46 PM (Elapsed Time: 0.76 seconds)</p>
  </div>
  <div class="dlg-foot"><label><input type="checkbox">Close on completion</label><svg width="14" height="14" viewBox="0 0 14 14"><path d="M10 1h3v3h-3zM10 6h3v3h-3zM10 11h3v3h-3zM5 6h3v3H5zM5 11h3v3H5zM0 11h3v3H0z" fill="#aaa"/></svg></div>
</section>

<svg class="ink" width="1260" height="760" viewBox="0 0 1260 760" aria-hidden="true">
  <path d="M402 252L410 249L427 247L462 248L475 252L487 256L498 260L510 263L521 269L530 278L539 291L545 305L547 318L546 330L537 342L520 353L510 362L497 373L483 382L467 390L452 396L437 402L420 406L400 409L380 409L363 409L348 406L333 402L322 395L312 387L301 376L293 365L293 307L296 297L300 289L314 273L330 257L343 246L357 237L366 231L377 227L410 227L424 230L437 233L450 240L462 248"/>
  <path d="M607 523L600 518L590 513L572 512L553 512L535 511L517 508L493 509L483 512L473 513L453 518L446 521L440 525L435 531L430 540L427 550L427 575L433 587L441 596L450 603L460 608L470 611L483 614L497 617L512 619L523 623L587 623L604 618L623 615L635 609L647 602L653 592L656 578L655 567L653 557L649 549L642 541L631 533L620 523L610 520L600 517L590 513M642 541L650 533L660 522L667 512L673 502L681 488L688 473L695 459L700 447L705 433L710 420L716 404L722 387L727 371L732 357L736 344L740 332L744 317L748 303L754 289L760 278L765 264L770 253L775 242L782 233L791 221L800 209L814 192L828 173L843 155L860 137L873 122L888 110L899 101L910 93L923 88L937 83L967 80L1005 78M932 60L947 61L973 68L990 73L1005 79L987 92L977 103L967 117L962 127L959 135"/>
  <path d="M905 570L897 559L886 555L873 552L853 549L840 552L850 546L890 547L910 554L933 565L944 573L953 582L961 592L967 603L972 615L975 627L976 650L975 677L971 693L958 708L941 719L923 728L908 731L893 734L866 734L839 730L818 728L797 725L779 721L763 716L755 710L749 701L743 690L740 680L738 665L737 650L738 627L743 603L749 592L757 583L766 571L777 560L792 553L810 547L843 547"/>
  <path d="M1205 472L1190 470L1175 468L1164 469L1155 474L1146 480L1141 487L1139 495L1139 510L1145 518L1153 525L1165 530L1179 532L1196 535L1216 535L1224 527L1231 520L1236 510L1233 501L1229 493L1223 486L1214 480L1199 473"/>
</svg>
</body>
</html>
```
FILE: styles.css
```css
* { box-sizing: border-box; }
body { margin: 0; min-height: 100vh; position: relative; overflow: hidden; background: #f0f0f0; color: #4c4c4c; font: 14px/18px "Noto Sans", "Open Sans", sans-serif; }
h1, h2, h3, p, ul { margin: 0; padding: 0; font-weight: 400; }
ul { list-style: none; }
a { color: inherit; text-decoration: none; }
button { border: 0; padding: 0; margin: 0; background: none; font: inherit; color: inherit; }
input, select { font: inherit; color: inherit; margin: 0; }
svg { display: block; flex: none; }
.defs { position: absolute; width: 0; height: 0; }
.c-dk { color: #555; }
.c-md { color: #6e6e6e; }
.c-lt { color: #bdbdbd; }
.c-blue { color: #4a9fd8; }
.c-pale { color: #b4d7ee; }
.fade { opacity: .45; }
.r90 { transform: rotate(90deg); }
.r180 { transform: rotate(180deg); }
.r270 { transform: rotate(270deg); }

.app { height: 100vh; display: flex; flex-direction: column; }

/* title bar and ribbon tabs */
.top { display: flex; gap: 5px; height: 74px; border-bottom: 1px solid #bdbdbd; white-space: nowrap; }
.top-main { flex: 0 0 554px; min-width: 0; display: flex; flex-direction: column; }
.quick { display: flex; align-items: center; height: 41px; gap: 15px; padding: 0 0 2px 14px; }
.undo { display: flex; align-items: center; gap: 7px; }
.quick .undo { margin-left: -3px; }
.quick .undo + .undo { margin-left: -2px; }
.quick h1 { font-size: 14px; color: #8b8b8b; margin-left: auto; margin-right: 68px; }
.quick .save { margin: 0 6px 0 -2px; }
.tabs { display: flex; height: 32px; font-size: 15px; }
.tab { padding: 0 19px; line-height: 34px; color: #666; }
.tab.project { background: #0078d0; color: #fff; padding: 0 23px; margin-right: 7px; }
.tab.active { background: #f9f9f9; border: 1px solid #c6c6c6; border-bottom: 0; height: 33px; color: #0f72b8; padding: 0 15px; margin-right: 2px; line-height: 33px; }
.ctx { display: flex; flex-direction: column; min-width: 0; border-top: 5px solid; color: #757575; }
.ctx span { text-align: center; height: 36px; line-height: 30px; }
.ctx.orange { border-color: #eda858; background: #f1e9e0; flex: 0 0 285px; }
.ctx.purple { border-color: #8b80b8; background: #e4e2ea; flex: 0 0 89px; }
.ctx.blue { border-color: #6699e8; background: #e0e8f4; flex: 0 0 108px; }
.ctx .tab { padding: 0 18px; }
.purple .tabs, .blue .tabs { justify-content: center; }
.purple .tab, .blue .tab { padding: 0; }

/* ribbon */
.ribbon { display: flex; flex: none; height: 114px; padding: 4px 0; background: #f8f8f8; border-bottom: 1px solid #c2c2c2; white-space: nowrap; }
.group { display: flex; flex-direction: column; border-right: 1px solid #d2d2d2; }
.gbody { display: flex; height: 88px; }
.glabel { text-align: center; font-size: 13px; line-height: 20px; padding: 1px 8px 0 0; }
.g-clip { flex: 0 0 125px; padding-left: 4px; }
.g-model { flex: 0 0 399px; padding-left: 7px; }
.g-view { flex: 0 0 181px; padding-left: 9px; }
.g-mode { flex: 0 0 108px; padding-left: 9px; }
.g-run { flex: 0 0 211px; padding-left: 8px; border: 0; }
.big { display: flex; flex-direction: column; align-items: center; min-width: 44px; line-height: 17px; padding-top: 2px; text-align: center; }
.big > svg:first-child { margin-bottom: 5px; }
.big > svg.tall { margin: 3px 0 8px; }
.big .arrow { margin-top: 6px; }
.g-model .save-btn { margin-left: 4px; }
.dim { color: #9a9a9a; }
.col { display: flex; flex-direction: column; margin-left: 6px; }
.small { display: flex; align-items: center; height: 28px; gap: 6px; }
.small > svg { width: 20px; height: 20px; }
.small > .arrow { width: 7px; height: 4px; margin-left: 3px; }
.g-model .big + .col { margin-left: 4px; }
.g-model .c-exp { margin-left: 6px; }
.g-model .c-exp + .big { margin-left: 12px; }
.g-view .big + .big { margin-left: 8px; }
.tools { display: grid; grid-template: repeat(3, 28px) / repeat(2, 28px); margin-left: 4px; }
.tools button { display: grid; place-items: center; }
.tools svg { width: 20px; height: 20px; }
.tools .on { background: #bcd5ea; }
.g-mode .col { margin-left: 0; }
.g-mode .small { gap: 5px; }
.g-run .big + .big { margin-left: 7px; }

/* work area */
.work { flex: 1; min-height: 0; display: grid; grid-template-columns: 210px minmax(0, 755fr) minmax(0, 698fr); gap: 8px; padding: 7px 0 2px 6px; }
.contents { display: flex; flex-direction: column; background: #f8f8f8; border: 1px solid #cdcdcd; border-top: 6px solid #cbcbcb; overflow: hidden; }
.panel-head { display: flex; align-items: center; gap: 11px; padding: 0 7px 2px 6px; height: 32px; }
.panel-head h2 { font-size: 18px; color: #6a6a6a; flex: 1; }
.find { display: flex; align-items: center; gap: 9px; padding: 11px 3px 0 4px; height: 43px; }
.search { flex: 1; min-width: 0; display: flex; align-items: center; gap: 13px; height: 30px; background: #fff; border: 1px solid #949494; padding: 0 8px 0 6px; }
.search input { flex: 1; width: 0; min-width: 0; border: 0; padding: 0; outline: 0; background: none; font-style: italic; }
.search input::placeholder { color: #555; opacity: 1; }
.listby { display: flex; padding: 11px 0 0 20px; height: 54px; }
.lb { width: 40px; height: 41px; padding-left: 6px; border-bottom: 2px solid #cbcbcb; }
.lb.on { border-bottom: 4px solid #0078d0; height: 42px; }
.lb.cut { width: 12px; padding-left: 7px; }
.dots { width: 19px; height: 4px; margin: 18px 0 0 16px; background: linear-gradient(90deg, #333 4px, transparent 4px 7px, #333 7px 11px, transparent 11px 14px, #333 14px 18px, transparent 18px); }
.contents h3 { font-size: 16px; font-weight: 600; padding: 13px 0 0 20px; height: 43px; line-height: 22px; }
.tree { flex: 1; white-space: nowrap; }
.tree li { display: flex; align-items: center; height: 30px; }
.tree .l0 { padding-left: 3px; gap: 7px; height: 31px; }
.tree .l1 { padding-left: 17px; gap: 6px; }
.tree .l2 { padding-left: 31px; gap: 5px; }
.tree .tw { margin-bottom: 2px; }
.tree label { display: flex; align-items: center; gap: 6px; height: 30px; padding-left: 1px; border: 1px solid transparent; flex: none; }
.tree .picked label { background: #c4daee; border-color: #1176bd; }
.tree li.legend { height: 31px; padding: 0 0 6px 52px; }
.legend i { width: 22px; height: 2px; background: #7fb37a; }
input[type="checkbox"] { appearance: none; width: 18px; height: 18px; background: #fff; border: 1px solid #858585; }
input[type="checkbox"]:checked::after { content: ""; display: block; width: 5px; height: 10px; margin: 1px 0 0 6px; border: solid #555; border-width: 0 2px 2px 0; transform: rotate(35deg); }
.hbar { display: flex; align-items: center; flex: none; height: 20px; padding: 0 4px; background: #e9e9e9; }
.hbar i { width: 106px; height: 11px; margin-left: 5px; border-radius: 6px; background: #b3b3b3; }
.hbar svg:last-child { margin-left: auto; }
.vbar { display: flex; flex-direction: column; align-items: center; width: 21px; background: #eaeaea; padding: 5px 0; }
.vbar i { width: 11px; border-radius: 6px; background: #b3b3b3; }
.vbar svg:last-child { margin-top: auto; }

/* model document */
.model { display: flex; flex-direction: column; background: #f8f8f8; border: solid #cdcdcd; border-width: 0 1px 1px; min-height: 0; }
.doc-tabs { display: flex; align-items: center; justify-content: space-between; height: 28px; flex: none; margin: 0 -1px; padding-right: 5px; background: #f0f0f0; border-bottom: 3px solid #0f7acb; }
.doc { display: flex; align-items: center; gap: 8px; height: 28px; padding: 3px 8px 0 7px; background: #0078d0; color: #fff; }
.doc svg:last-child { margin-left: 4px; }
.sheet { position: relative; flex: 1; min-height: 0; display: flex; justify-content: flex-end; }
.canvas { position: absolute; inset: 0 21px 0 0; overflow: hidden; font: 17px/20px "Liberation Sans", Arial, sans-serif; color: #111; }
.edges { position: absolute; left: 0; top: 0; }
.node { position: absolute; width: 142px; height: 90px; padding-top: 2px; display: flex; align-items: center; justify-content: center; text-align: center; white-space: nowrap; }
.oval { background: #84cc7c; border-radius: 50%; }
.box { background: #f1e27a; border-radius: 14px; }
.node.blue { background: #72adcb; }
.node.red { background: #f00; }
.sh { box-shadow: 3px 3px 0 #999; }
.n1 { left: 108px; top: 60px; }
.n2 { left: 247px; top: 179px; }
.n3 { left: 247px; top: 298px; }
.n4 { left: 332px; top: 418px; }
.n5 { left: 332px; top: 537px; }
.n6 { left: 161px; top: 656px; }
.n7 { left: 553px; top: 380px; }
.n8 { left: 553px; top: 500px; }
.param { position: absolute; left: 244px; top: 63px; color: #555; }
.canvas-tools { position: relative; display: flex; align-items: center; gap: 8px; height: 47px; padding: 8px 29px 0 0; }
.canvas-tools .search { width: 172px; flex: none; margin: 0 -2px 0 4px; }
.canvas-tools b { font: 600 20px/20px "Noto Sans", sans-serif; margin-left: 8px; }
.sheet .vbar { position: absolute; right: 0; top: 47px; bottom: 0; }
.sheet .vbar i { height: 249px; margin-top: 6px; }
.hbar.faint { height: 21px; background: #f0f0f0; color: #c9c9c9; padding-right: 25px; }
.status { display: flex; align-items: center; gap: 14px; height: 34px; flex: none; background: #f8f8f8; padding-left: 7px; }
.ver { margin-right: auto; font-size: 13px; }
.fit { margin-right: 3px; }
.zoombox { display: flex; align-items: center; height: 28px; background: #fff; margin-left: -7px; padding: 0 8px; }
.zoombox button { width: 14px; font-size: 18px; font-weight: 600; line-height: 20px; }
.zoombox input { appearance: none; width: 125px; height: 16px; margin: 0 5px; background: linear-gradient(90deg, #a6a6a6 51%, #dedede 51%) center / 100% 4px no-repeat; }
.zoombox input::-webkit-slider-thumb { appearance: none; width: 4px; height: 14px; background: #666; }
.pct { width: 54px; margin-right: 15px; text-align: center; }

/* map */
.mapview { display: flex; flex-direction: column; min-width: 0; min-height: 0; border-left: 1px solid #cdcdcd; border-bottom: 1px solid #cdcdcd; }
.map-tab { flex: none; height: 28px; padding: 4px 6px; background: #cbcbcb; }
.map { flex: 1; min-height: 0; overflow: hidden; background: #fff; }
.lines path { fill: none; stroke: #438a33; stroke-width: 1.6px; vector-effect: non-scaling-stroke; }
.map-status { padding-left: 6px; gap: 0; height: 32px; }
.combo { position: relative; width: 125px; }
.combo select { appearance: none; width: 100%; height: 27px; padding: 0 6px; border: 1px solid #959595; border-radius: 0; background: #fff; font-size: 13px; }
.combo svg { position: absolute; right: 5px; top: 12px; }
.sep { flex: none; width: 1px; height: 20px; background: #bdbdbd; margin: 0 5px; }
.mt { width: 27px; height: 27px; display: grid; place-items: center; margin-right: 1px; }
.mt.on { background: #9fd2f0; }
.coords { flex: none; display: flex; align-items: center; gap: 12px; margin: 0 82px 0 84px; white-space: nowrap; }
.rot { margin-left: 3px; }

/* floating attribute table */
.win { position: absolute; left: 1006px; top: 10px; width: 675px; height: 513px; padding: 0 8px; background: #f1f1f1; border: 1px solid #9d9d9d; border-top: 2px solid #a2a2a2; box-shadow: 0 4px 14px rgba(0, 0, 0, .35); }
.win-title { display: flex; align-items: center; gap: 44px; height: 41px; margin: 0 -8px 8px; padding: 0 21px 2px 15px; border-bottom: 1px solid #b8b8b8; color: #8f8f8f; }
.win-title span { flex: 1; }
.win-title svg { color: #333; }
.win-tabs { display: flex; align-items: center; justify-content: space-between; height: 28px; padding-right: 4px; border-bottom: 3px solid #cdcdcd; }
.win-tabs a { display: flex; align-items: center; gap: 8px; height: 26px; padding: 0 7px 0 6px; background: #c8c8c8; color: #777; }
.win-body { border: 1px solid #cfcfcf; border-top: 0; background: #f1f1f1; }
.win-sheet { margin: 2px 1px 0; border: 1px solid #b3b3b3; background: #f8f8f8; }
.ttools { display: flex; align-items: center; gap: 13px; height: 36px; padding: 0 8px 2px 6px; background: #f0f0f0; border-bottom: 1px solid #b8b8b8; }
.ttools b { font-weight: 600; margin-right: -1px; }
.ttools svg { width: 20px; height: 20px; }
.ttools .sep { height: 28px; margin: 0 -3px 0 -2px; }
.ttools .burger { margin-left: auto; }
.grid-area { display: flex; gap: 3px; padding: 2px 3px 3px 0; }
.grid-wrap { flex: 1; min-width: 0; overflow: hidden; background: #fff; }
table { width: 100%; table-layout: fixed; border-collapse: separate; border-spacing: 0; }
.w-n { width: 37px; } .w-g { width: 5px; } .w-o { width: 46px; } .w-s { width: 78px; } .w-e { width: 176px; } .w-h { width: 176px; }
th, td { height: 31px; padding: 0 0 0 6px; text-align: left; font-weight: 400; white-space: nowrap; overflow: hidden; border-right: 1px solid #cfcfcf; border-bottom: 1px solid #cfcfcf; }
td:last-child, th:last-child { border-right: 0; }
tbody td:last-child { padding-left: 4px; }
thead th, thead td { height: 29px; background: #ebebeb; font-weight: 600; border-bottom: 0; color: #333; padding-left: 8px; }
thead .corner { background: #fff; padding: 8px 2px 0 0; }
.corner i { display: block; width: 12px; height: 12px; margin-left: auto; background: linear-gradient(135deg, transparent 50%, #c4c4c4 50%); }
tbody th { background: #ececec; color: #868686; padding-left: 3px; }
tbody tr:nth-child(even) td { background: #e9e9e9; }
tbody tr td.g, thead .g { background: #fff; padding: 0; border: 0; }
.part th, .part td { height: 14px; }
.part div { display: flex; align-items: flex-end; height: 13px; line-height: 30px; overflow: hidden; }
.grid-wrap .hbar { height: 22px; margin-top: 2px; }
.grid-wrap .hbar i { width: 239px; }
.grid-area .vbar { margin-bottom: 24px; }
.grid-area .vbar i { height: 26px; margin-top: 236px; }
.tstatus { display: flex; align-items: center; height: 35px; background: #f8f8f8; padding: 0 1px 2px; white-space: nowrap; }
.view { display: grid; place-items: center; width: 29px; height: 29px; }
.view.on { background: #9cc8ea; border: 2px solid #1f78bf; }
.first { margin: 0 16px 0 12px; }
.last { margin-right: 15px; }
.selcount { width: 140px; }
.filters { width: 53px; }
.tstatus .fade { margin-right: 6px; }
.updown { margin-left: 9px; }
.tstatus .zoombox { margin-left: auto; background: none; padding: 0; }
.tstatus .pct { background: #fff; line-height: 28px; width: 50px; margin: 0 0 0 10px; }

/* run dialog */
.dlg { position: absolute; left: 959px; top: 653px; width: 550px; height: 265px; padding: 0 10px; background: #fff; border: 1px solid #1478b8; box-shadow: 0 5px 20px rgba(0, 0, 0, .35); }
.dlg-head { display: flex; justify-content: space-between; align-items: center; height: 28px; padding: 0 2px 2px 0; color: #777; }
.dlg-head h2 { font-size: 18px; color: #147ab8; }
.run-row { display: flex; align-items: flex-end; justify-content: space-between; margin-top: 24px; }
.run-col { flex: 0 0 499px; color: #666; font-size: 13px; line-height: 17px; }
.bar { height: 8px; margin-top: 3px; background: #c8c8c8; }
.stop { width: 24px; height: 24px; border: 2px solid #666; border-radius: 50%; display: grid; place-items: center; }
.stop i { width: 11px; height: 11px; background: #555; border-radius: 1px; }
.log { margin-top: 9px; height: 134px; padding: 4px 3px; border: 1px solid #d8d8d8; line-height: 20px; color: #808080; white-space: nowrap; }
.log .exec { color: #0f8a80; }
.errors { padding: 2px 0; }
.log .err { display: flex; align-items: center; gap: 4px; height: 21px; padding-left: 14px; color: #c9300f; font: 13px/21px "DejaVu Sans Mono", "Liberation Mono", monospace; }
.log .err a { font-weight: 700; text-decoration: underline; }
.dlg-foot { display: flex; justify-content: space-between; align-items: center; padding-top: 7px; }
.dlg-foot label { display: flex; align-items: center; gap: 5px; }
.dlg-foot svg { margin: 14px -5px 0 0; }

/* pen markup */
.ink { position: absolute; left: 0; top: 0; pointer-events: none; }
.ink path { fill: none; stroke: #fc8c20; stroke-width: 4px; stroke-linecap: round; stroke-linejoin: round; }
```
